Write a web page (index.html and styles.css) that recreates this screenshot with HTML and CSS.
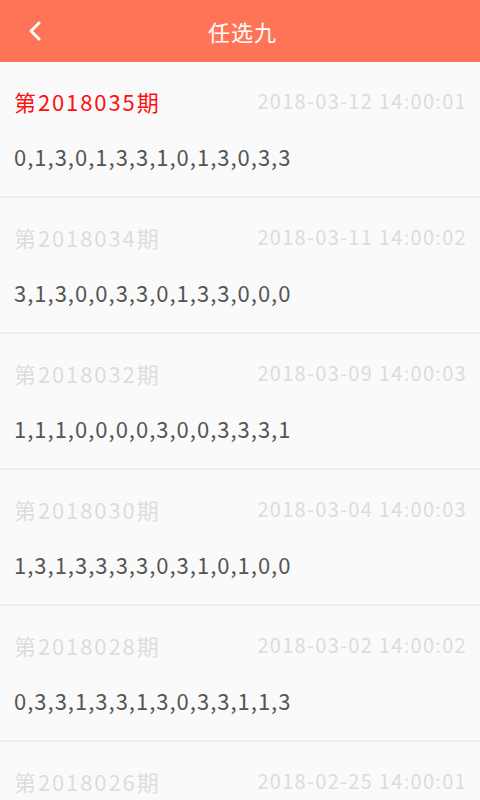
FILE: index.html
```html
<!DOCTYPE html>
<html>
	<head>
		<meta charset="utf-8">
		<meta name="viewport" content="width=device-width, initial-scale=1">
		<title>任选九</title>
		<link rel="stylesheet" href="styles.css">
	</head>
	<body>
		<div class="header">
			<div class="back">
				<svg width="16" height="22" viewBox="0 0 16 22">
					<polyline points="12,3 4,11 12,19" fill="none" stroke="#fff" stroke-width="3" stroke-linecap="round" stroke-linejoin="round"/>
				</svg>
			</div>
			<h1>任选九</h1>
			<div class="back"></div>
		</div>
		<div class="list">
			<div class="item current">
				<div class="top">
					<span class="issue">第2018035期</span>
					<span class="time">2018-03-12 14:00:01</span>
				</div>
				<div class="nums">0,1,3,0,1,3,3,1,0,1,3,0,3,3</div>
			</div>
			<div class="item">
				<div class="top">
					<span class="issue">第2018034期</span>
					<span class="time">2018-03-11 14:00:02</span>
				</div>
				<div class="nums">3,1,3,0,0,3,3,0,1,3,3,0,0,0</div>
			</div>
			<div class="item">
				<div class="top">
					<span class="issue">第2018032期</span>
					<span class="time">2018-03-09 14:00:03</span>
				</div>
				<div class="nums">1,1,1,0,0,0,0,3,0,0,3,3,3,1</div>
			</div>
			<div class="item">
				<div class="top">
					<span class="issue">第2018030期</span>
					<span class="time">2018-03-04 14:00:03</span>
				</div>
				<div class="nums">1,3,1,3,3,3,3,0,3,1,0,1,0,0</div>
			</div>
			<div class="item">
				<div class="top">
					<span class="issue">第2018028期</span>
					<span class="time">2018-03-02 14:00:02</span>
				</div>
				<div class="nums">0,3,3,1,3,3,1,3,0,3,3,1,1,3</div>
			</div>
			<div class="item">
				<div class="top">
					<span class="issue">第2018026期</span>
					<span class="time">2018-02-25 14:00:01</span>
				</div>
				<div class="nums">1,0,3,3,1,0,0,3,1,1,3,0,3,0</div>
			</div>
		</div>
	</body>
</html>
```

FILE: styles.css
```css
body{
	margin: 0;
	background: #fafafa;
	font-family: "Noto Sans CJK SC", sans-serif;
	height: 800px;
	overflow: hidden;
}
.header{
	height: 62px;
	background: #ff7457;
	display: flex;
	align-items: center;
	justify-content: space-between;
	padding: 0 20px;
}
.back{
	width: 30px;
	display: flex;
	align-items: center;
	padding-left: 7px;
}
.header h1{
	margin: 0;
	color: #fff;
	font-size: 22px;
	font-weight: normal;
	letter-spacing: 1px;
	padding-left: 5px;
}
.item{
	height: 134px;
	border-bottom: 2px solid #eeeeee;
	padding: 0 14px;
}
.top{
	display: flex;
	justify-content: space-between;
	align-items: center;
	padding-top: 24px;
	height: 30px;
	line-height: 30px;
}
.issue{
	font-size: 22px;
	color: #dddddd;
	letter-spacing: 1.9px;
}
.current .issue{
	color: #ff0f0f;
}
.time{
	font-size: 20px;
	color: #dcdcdc;
	letter-spacing: 1.3px;
	margin-right: -1px;
}
.nums{
	margin-top: 25px;
	height: 30px;
	line-height: 30px;
	font-size: 22px;
	color: #555555;
	letter-spacing: 1px;
}
```
